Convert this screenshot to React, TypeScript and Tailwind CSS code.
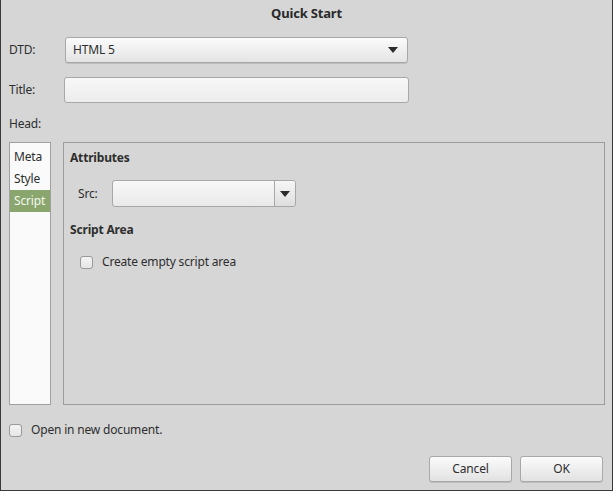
import { useState } from "react";

function Caret() {
  return (
    <svg viewBox="0 0 10 6" className="w-[10px] h-[6px]" aria-hidden="true">
      <path d="M0 0h10L5 6z" fill="#2b2b2b" />
    </svg>
  );
}

function Checkbox({ label, className = "" }: { label: string; className?: string }) {
  const [on, setOn] = useState(false);
  return (
    <label className={`flex items-center gap-[9px] cursor-default ${className}`}>
      <span
        onClick={() => setOn(!on)}
        className="w-[13px] h-[13px] rounded-[3px] border border-[#9a9a9a] bg-gradient-to-b from-[#f4f4f4] to-[#e6e6e6] flex items-center justify-center"
      >
        {on && <span className="w-[7px] h-[7px] bg-[#4a4a4a]" />}
      </span>
      <span>{label}</span>
    </label>
  );
}

export default function App() {
  const [tab, setTab] = useState("Script");
  const tabs = ["Meta", "Style", "Script"];

  return (
    <div
      className="w-[613px] h-[491px] bg-[#d6d6d6] border-x border-b border-[#3a3a3a] flex flex-col text-[12px] text-[#2e2e2e] tracking-[-0.015em]"
      style={{ fontFamily: '"Noto Sans", "Open Sans", sans-serif' }}
    >
      {/* Title */}
      <div className="h-[27px] flex items-center justify-center font-bold text-[13px] text-[#2a2a2a]">
        Quick Start
      </div>

      {/* DTD */}
      <div className="flex items-center mt-[10px] pl-[8px]">
        <span className="w-[56px]">DTD:</span>
        <div className="w-[343px] h-[26px] rounded-[3px] border border-[#a8a8a8] bg-gradient-to-b from-[#fbfbfb] to-[#e4e4e4] shadow-[0_1px_0_#bdbdbd] flex items-center justify-between pl-[7px] pr-[9px]">
          <span>HTML 5</span>
          <Caret />
        </div>
      </div>

      {/* Title */}
      <div className="flex items-center mt-[14px] pl-[8px]">
        <span className="w-[55px]">Title:</span>
        <div className="w-[345px] h-[26px] rounded-[3px] border border-[#a8a8a8] bg-gradient-to-b from-[#f8f8f8] to-[#ececec]" />
      </div>

      <div className="pl-[8px] mt-[13px] h-[16px] leading-[16px]">Head:</div>

      {/* Main area */}
      <div className="flex mt-[10px] pl-[8px] gap-[12px]">
        <div className="w-[42px] h-[263px] bg-[#fafafa] border border-[#a0a0a0] flex flex-col pt-[3px]">
          {tabs.map((t) => (
            <div
              key={t}
              onClick={() => setTab(t)}
              className={`h-[22px] leading-[22px] pl-[4px] ${tab === t ? "bg-[#8aa66e] text-[#f4f7ef]" : ""}`}
            >
              {t}
            </div>
          ))}
        </div>

        <div className="w-[542px] h-[263px] border border-[#9c9c9c] pl-[6px] pt-[6px]">
          <div className="font-bold">Attributes</div>
          <div className="flex items-center mt-[13px] pl-[8px]">
            <span className="w-[34px]">Src:</span>
            <div className="w-[184px] h-[27px] rounded-[3px] border border-[#a8a8a8] bg-gradient-to-b from-[#f8f8f8] to-[#e9e9e9] flex">
              <div className="flex-1" />
              <div className="w-[21px] border-l border-[#a8a8a8] bg-gradient-to-b from-[#f6f6f6] to-[#dedede] rounded-r-[3px] flex items-center justify-center">
                <Caret />
              </div>
            </div>
          </div>
          <div className="font-bold mt-[14px]">Script Area</div>
          <Checkbox label="Create empty script area" className="mt-[14px] pl-[10px]" />
        </div>
      </div>

      <Checkbox label="Open in new document." className="mt-[16px] pl-[8px]" />

      {/* Buttons */}
      <div className="flex justify-end gap-[8px] pr-[9px] mt-[17px]">
        <button className="w-[83px] h-[26px] rounded-[3px] border border-[#a8a8a8] bg-gradient-to-b from-[#fbfbfb] to-[#e2e2e2] shadow-[0_1px_0_#bdbdbd]">
          Cancel
        </button>
        <button className="w-[83px] h-[26px] rounded-[3px] border border-[#a8a8a8] bg-gradient-to-b from-[#fbfbfb] to-[#e2e2e2] shadow-[0_1px_0_#bdbdbd]">
          OK
        </button>
      </div>
    </div>
  );
}
